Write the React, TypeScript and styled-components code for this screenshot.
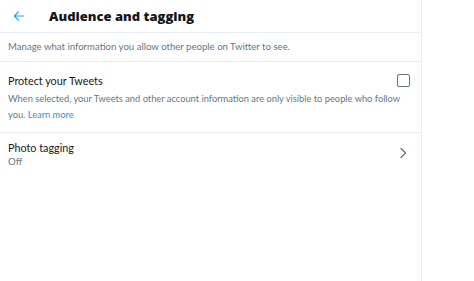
import React from 'react'
import styled, { createGlobalStyle } from 'styled-components'

const Global = createGlobalStyle`
  html, body {
    margin: 0;
    padding: 0;
    background: #fff;
  }
  body {
    font-family: Lato, 'Open Sans', sans-serif;
    color: #14171a;
  }
`

const Page = styled.div`
  display: flex;
  height: 281px;
`

const Column = styled.div`
  width: 421px;
  border-right: 1px solid #e6ecf0;
  display: flex;
  flex-direction: column;
`

const Header = styled.div`
  display: flex;
  align-items: center;
  height: 32px;
  border-bottom: 1px solid #e6ecf0;
  padding-left: 9px;
  .back {
    width: 19px;
    height: 19px;
    display: flex;
    align-items: center;
    justify-content: center;
    color: #1da1f2;
  }
  .title {
    margin-left: 21px;
    font-family: 'Open Sans', sans-serif;
    font-size: 13px;
    font-weight: 800;
  }
`

const Intro = styled.div`
  padding: 6px 8px 7px;
  font-size: 9.6px;
  line-height: 15px;
  color: #657786;
  border-bottom: 1px solid #e6ecf0;
`

const Section = styled.div<{ $top: number; $last?: boolean }>`
  padding: ${p => p.$top}px 8px 9px;
  border-bottom: ${p => (p.$last ? 'none' : '1px solid #e6ecf0')};
  display: flex;
  flex-direction: column;
`

const Row = styled.div`
  display: flex;
  align-items: center;
  justify-content: space-between;
`

const Label = styled.div`
  font-size: 10.8px;
  line-height: 17px;
  color: #14171a;
`

const Sub = styled.div`
  font-size: 9.6px;
  line-height: 11px;
  color: #657786;
`

const Help = styled.div`
  margin-top: 2px;
  font-size: 9.3px;
  line-height: 16px;
  color: #657786;
  a {
    color: #1b95e0;
    text-decoration: none;
  }
`

const Checkbox = styled.div`
  width: 11px;
  height: 11px;
  border: 1.5px solid #657786;
  border-radius: 2px;
  margin-right: 3px;
`

const Chevron = styled.div`
  color: #657786;
  display: flex;
  margin-right: 5px;
`

export default function App() {
  return (
    <Page>
      <Global />
      <Column>
        <Header>
          <div className="back">
            <svg width="14" height="14" viewBox="0 0 24 24" fill="none" stroke="currentColor" strokeWidth="2" strokeLinecap="round" strokeLinejoin="round">
              <path d="M20 12H4M11 5l-7 7 7 7" />
            </svg>
          </div>
          <div className="title">Audience and tagging</div>
        </Header>
        <Intro>Manage what information you allow other people on Twitter to see.</Intro>
        <Section $top={10}>
          <Row>
            <Label>Protect your Tweets</Label>
            <Checkbox />
          </Row>
          <Help>
            When selected, your Tweets and other account information are only visible to people who follow
            you. <a href="#">Learn more</a>
          </Help>
        </Section>
        <Section $top={6} $last>
          <Row>
            <div>
              <Label>Photo tagging</Label>
              <Sub>Off</Sub>
            </div>
            <Chevron>
              <svg width="10" height="12" viewBox="0 0 10 12" fill="none" stroke="currentColor" strokeWidth="1.4" strokeLinecap="round" strokeLinejoin="round">
                <path d="M3 1.5L7.5 6 3 10.5" />
              </svg>
            </Chevron>
          </Row>
        </Section>
      </Column>
    </Page>
  )
}
